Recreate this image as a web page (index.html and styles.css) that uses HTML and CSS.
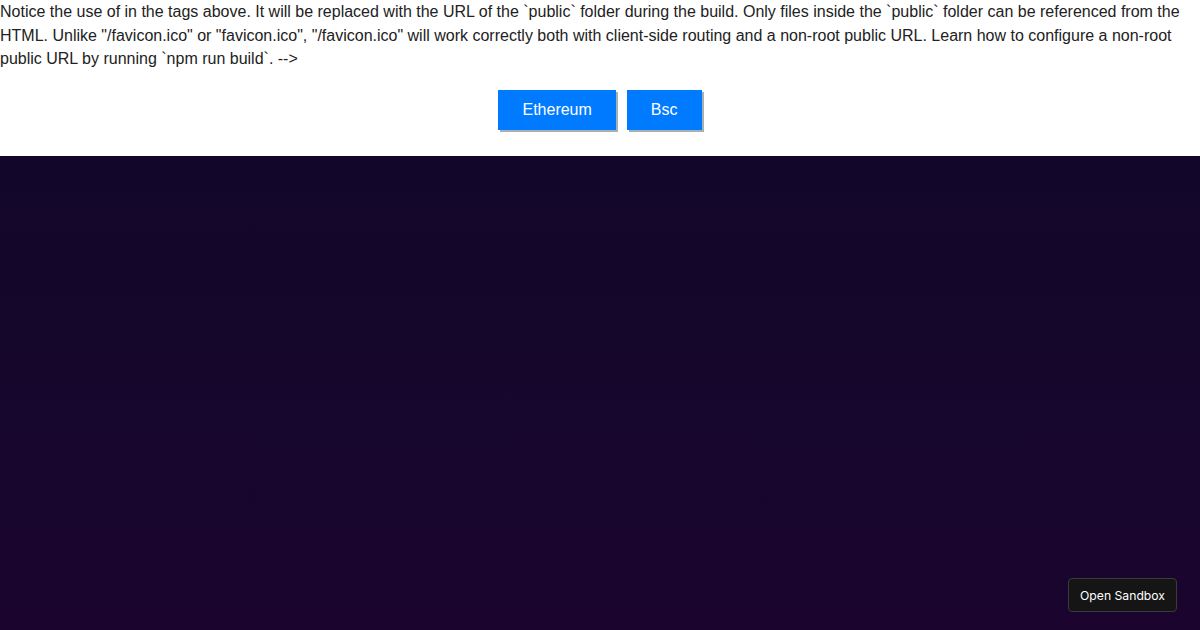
FILE: index.html
```html
<!DOCTYPE html>
<html lang="en">
<head>
<meta charset="utf-8">
<title>App</title>
<link rel="stylesheet" href="styles.css">
</head>
<body>
<div class="top">
  <p class="notice">Notice the use of in the tags above. It will be replaced with the URL of the `public` folder during the build. Only files inside the `public` folder can be referenced from the HTML. Unlike "/favicon.ico" or "favicon.ico", "/favicon.ico" will work correctly both with client-side routing and a non-root public URL. Learn how to configure a non-root public URL by running `npm run build`. --&gt;</p>
  <div class="chains">
    <button class="chain">Ethereum</button>
    <button class="chain">Bsc</button>
  </div>
</div>
<div class="stage">
  <button class="sandbox">Open Sandbox</button>
</div>
</body>
</html>
```
FILE: styles.css
```css
html, body {
  margin: 0;
  padding: 0;
  height: 100%;
}
body {
  font-family: "Liberation Sans", Arial, sans-serif;
  display: flex;
  flex-direction: column;
  background: #1a062e;
}
.top {
  background: #ffffff;
  height: 156px;
  flex: none;
}
.notice {
  margin: 0;
  font-size: 16px;
  line-height: 23.6px;
  color: #222222;
}
.chains {
  display: flex;
  justify-content: center;
  gap: 11px;
  margin-top: 19px;
}
.chain {
  font-family: "Liberation Sans", Arial, sans-serif;
  font-size: 16px;
  line-height: 18px;
  padding: 11px 24px;
  background: #007bff;
  color: #ffffff;
  border: none;
  box-shadow: 2px 2px 0 #a8b0b4;
}
.stage {
  flex: 1;
  background: linear-gradient(180deg, #12072a 0%, #1b052f 100%);
  display: flex;
  justify-content: flex-end;
  align-items: flex-end;
  padding: 0 23px 18px 0;
}
.sandbox {
  font-family: Inter, "Liberation Sans", sans-serif;
  font-size: 12.2px;
  color: #ffffff;
  background: #151515;
  border: 1px solid #3a3a3a;
  border-radius: 4px;
  height: 34px;
  padding: 0 11px;
}
```
